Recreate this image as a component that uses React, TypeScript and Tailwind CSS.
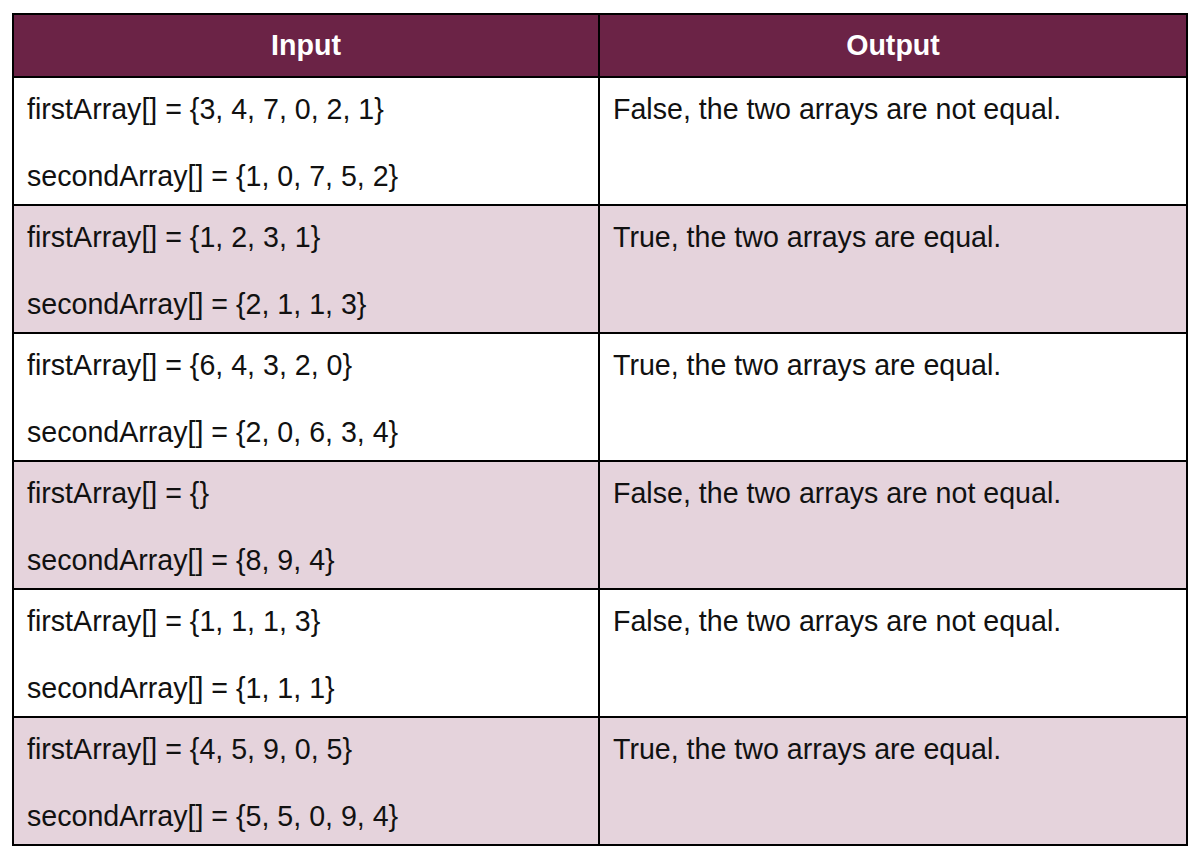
import React from 'react';

type Row = { first: string; second: string; output: string };

const rows: Row[] = [
  { first: '{3, 4, 7, 0, 2, 1}', second: '{1, 0, 7, 5, 2}', output: 'False, the two arrays are not equal.' },
  { first: '{1, 2, 3, 1}', second: '{2, 1, 1, 3}', output: 'True, the two arrays are equal.' },
  { first: '{6, 4, 3, 2, 0}', second: '{2, 0, 6, 3, 4}', output: 'True, the two arrays are equal.' },
  { first: '{}', second: '{8, 9, 4}', output: 'False, the two arrays are not equal.' },
  { first: '{1, 1, 1, 3}', second: '{1, 1, 1}', output: 'False, the two arrays are not equal.' },
  { first: '{4, 5, 9, 0, 5}', second: '{5, 5, 0, 9, 4}', output: 'True, the two arrays are equal.' },
];

const App: React.FC = () => {
  return (
    <div className="w-[1200px] h-[859px] bg-white pt-[13px] pl-[12px] font-['Liberation_Sans',Arial,sans-serif] text-[28.6px] text-[#111]">
      <div className="w-[1176px] border-2 border-black">
        <div className="grid grid-cols-2 bg-[#6b2346] text-white font-bold h-[61px]">
          <div className="flex items-center justify-center border-r-2 border-black">Input</div>
          <div className="flex items-center justify-center">Output</div>
        </div>
        {rows.map((r, i) => (
          <div
            key={i}
            className={`grid grid-cols-2 h-[128px] border-t-2 border-black ${i % 2 === 1 ? 'bg-[#e5d3dc]' : 'bg-white'}`}
          >
            <div className="border-r-2 border-black pl-[13px] pt-[11px] flex flex-col gap-[27px] leading-[40px]">
              <div>firstArray[] = {r.first}</div>
              <div>secondArray[] = {r.second}</div>
            </div>
            <div className="pl-[13px] pt-[11px] leading-[40px]">{r.output}</div>
          </div>
        ))}
      </div>
    </div>
  );
};

export default App;
